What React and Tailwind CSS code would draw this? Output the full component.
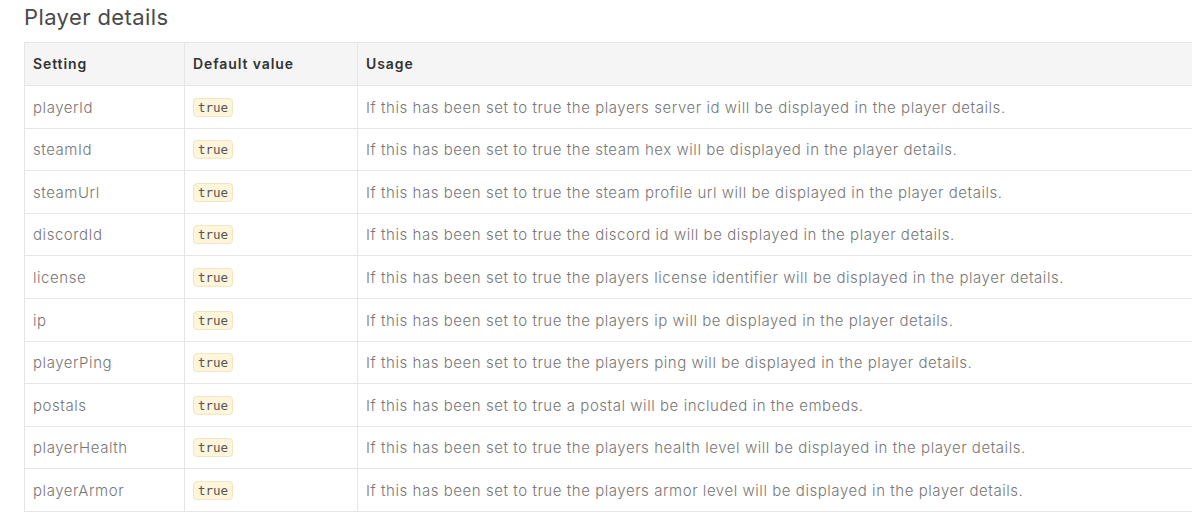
import React from 'react';

const rows = [
    ['playerId', 'If this has been set to true the players server id will be displayed in the player details.'],
    ['steamId', 'If this has been set to true the steam hex will be displayed in the player details.'],
    ['steamUrl', 'If this has been set to true the steam profile url will be displayed in the player details.'],
    ['discordId', 'If this has been set to true the discord id will be displayed in the player details.'],
    ['license', 'If this has been set to true the players license identifier will be displayed in the player details.'],
    ['ip', 'If this has been set to true the players ip will be displayed in the player details.'],
    ['playerPing', 'If this has been set to true the players ping will be displayed in the player details.'],
    ['postals', 'If this has been set to true a postal will be included in the embeds.'],
    ['playerHealth', 'If this has been set to true the players health level will be displayed in the player details.'],
    ['playerArmor', 'If this has been set to true the players armor level will be displayed in the player details.'],
];

const App = () => {
    return (
        <div className="h-[518px] w-[1192px] overflow-hidden bg-white pl-6 font-['Inter',sans-serif]">
            <h2 className="pt-[3px] text-[22px] leading-7 tracking-[0.4px] text-[#4a4a4a]">Player details</h2>
            <table className="mt-[11px] w-[1200px] border-collapse text-left">
                <thead>
                    <tr className="h-[43px] bg-[#f5f5f5] text-sm">
                        <th className="w-[160px] border border-[#e6e6e6] px-2 font-semibold tracking-[0.9px] text-[#333]">Setting</th>
                        <th className="w-[173px] border border-[#e6e6e6] px-2 font-semibold tracking-[0.9px] text-[#333]">Default value</th>
                        <th className="border border-[#e6e6e6] px-2 font-semibold tracking-[0.9px] text-[#333]">Usage</th>
                    </tr>
                </thead>
                <tbody>
                    {rows.map(([name, usage]) => (
                        <tr key={name} className="h-[42.6px] text-[15px]">
                            <td className="border border-[#e6e6e6] px-2 pt-[2px] font-light tracking-[0.55px] text-[#777]">{name}</td>
                            <td className="border border-[#e6e6e6] px-2">
                                <code className="inline-block rounded-sm border border-[#f3e6bd] bg-[#fdf6dc] px-[4px] py-[1px] font-['DejaVu_Sans_Mono',monospace] text-[12.5px] leading-[15px] text-[#555]">true</code>
                            </td>
                            <td className="border border-[#e6e6e6] px-2 pt-[2px] font-light tracking-[0.55px] text-[#777]">{usage}</td>
                        </tr>
                    ))}
                </tbody>
            </table>
        </div>
    );
};

export default App;
